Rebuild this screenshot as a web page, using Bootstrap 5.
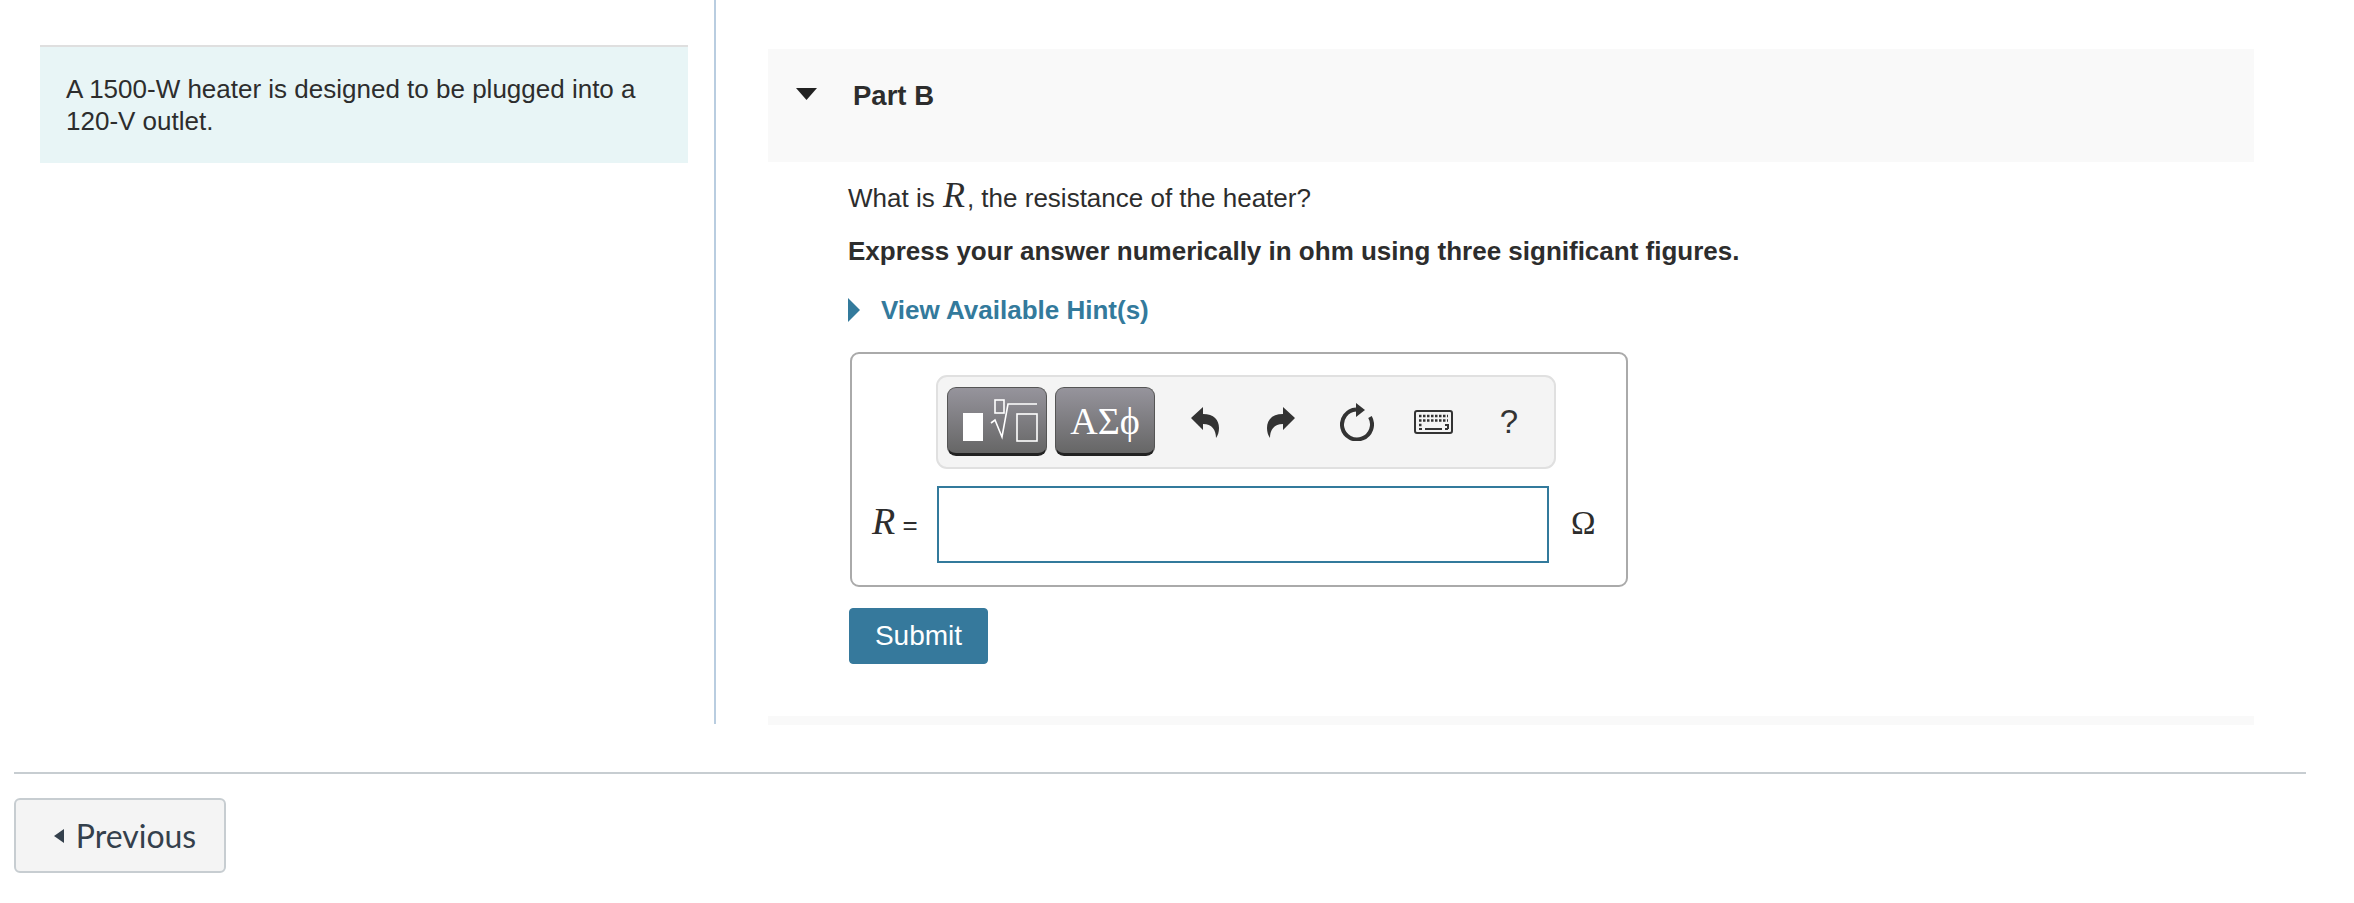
<!DOCTYPE html>
<html lang="en">
<head>
  <meta charset="UTF-8" />
  <title>Part B</title>
  <link href="https://cdn.jsdelivr.net/npm/bootstrap@5.3.3/dist/css/bootstrap.min.css" rel="stylesheet" />
  <style>
    body { font-family: "Liberation Sans", Arial, sans-serif; color: #2d2d2d; background: #fff; font-size: 26px; line-height: 32px; }
    .side-col { width: 716px; height: 724px; padding: 45px 26px 0 40px; border-right: 2px solid #b9cde0; flex: none; }
    .intro-box { background: #e8f5f6; border-top: 2px solid #dfdfdf; height: 118px; padding: 26px 26px 0; }
    .main-col { width: 1486px; margin-left: 52px; height: 725px; padding-top: 49px; }
    .part-head { height: 113px; background: #f9f9f9; padding: 31px 0 0 28px; }
    .part-title { font-size: 27.5px; margin-left: 36px; line-height: 32px; }
    .part-body { padding: 20px 0 0 80px; height: 554px; }
    .part-foot { height: 9px; background: #f9f9f9; }
    .q-line { height: 32px; margin-bottom: 20px; }
    .q-first { margin-bottom: 21px; }
    .q-rule { margin-bottom: 27px; }
    .math-var { font-family: "Liberation Serif", serif; font-style: italic; font-size: 36px; line-height: 0; margin: 0 2px 0 1px; }
    .hint-link { color: #337a9c; font-weight: 700; font-size: 26px; text-decoration: none; margin-left: 21px; }
    .answer-box { width: 778px; height: 235px; margin-left: 2px; border: 2px solid #aaa; border-radius: 9px; margin-top: 26px; padding: 21px 0 0 20px; }
    .tool-bar { width: 620px; height: 94px; margin-left: 64px; background: #f4f4f4; border: 2px solid #e0e0e0; border-radius: 11px; padding: 10px 0 0 9px; }
    .tpl-btn { width: 100px; height: 69px; border-radius: 9px; border: 1px solid #555; border-bottom: 3px solid #222; background: linear-gradient(#96949c, #666); color: #fff; font-family: "Liberation Serif", serif; font-size: 38px; padding: 0; }
    .tpl-btn svg { display: block; }
    .tool-icon { width: 76px; height: 69px; flex: none; color: #333; }
    .tool-first { margin-left: 12px; }
    .help-mark { font-size: 33px; color: #333; }
    .answer-row { margin-top: 17px; }
    .answer-label { width: 65px; font-size: 26px; white-space: nowrap; }
    .answer-label .math-var { font-size: 38px; margin: 0; }
    .answer-input { width: 612px; height: 77px; border: 2px solid #337a9c; background: #fff; border-radius: 0; outline: 0; }
    .unit-mark { font-family: "Liberation Serif", serif; font-size: 33px; margin: 0 0 4px 22px; }
    .send-btn { --bs-btn-bg: #36799c; --bs-btn-border-color: #36799c; --bs-btn-color: #fff; --bs-btn-hover-bg: #2e6985; --bs-btn-hover-color: #fff; width: 139px; height: 56px; margin: 21px 0 0 1px; font-size: 28px; border-radius: 4px; padding: 0; }
    .page-foot { margin: 47px 48px 0 14px; border-top: 2px solid #c7cdd1; padding-top: 24px; }
    .prev-btn { --bs-btn-bg: #f4f4f4; --bs-btn-border-color: #c7cdd1; --bs-btn-color: #34404c; --bs-btn-border-width: 2px; width: 212px; height: 75px; font-family: Lato, sans-serif; font-size: 32px; border-radius: 6px; padding: 0 0 0 10px; gap: 12px; }
  </style>
</head>
<body>
  <div class="d-flex">
    <div class="side-col">
      <div class="intro-box">A 1500-W heater is designed to be plugged into a 120-V outlet.</div>
    </div>
    <div class="main-col">
      <div class="part-head d-flex align-items-start">
        <svg class="mt-2" width="21" height="12" viewBox="0 0 21 12"><path d="M0 0H21L10.5 12Z" fill="#222"/></svg>
        <div class="part-title fw-bold">Part B</div>
      </div>
      <div class="part-body">
        <div class="q-line q-first">What is <span class="math-var">R</span>, the resistance of the heater?</div>
        <div class="q-line q-rule fw-bold">Express your answer numerically in ohm using three significant figures.</div>
        <div class="q-line d-flex align-items-center">
          <svg width="12" height="24" viewBox="0 0 12 24"><path d="M0 0L12 12L0 24Z" fill="#337a9c"/></svg>
          <a class="hint-link" href="#">View Available Hint(s)</a>
        </div>
        <div class="answer-box">
          <div class="tool-bar d-flex align-items-start">
            <button class="tpl-btn me-2" type="button">
              <svg width="98" height="65" viewBox="1 1 98 65" fill="none" stroke="#fff" stroke-width="1.6">
                <rect x="16" y="26" width="20" height="28" fill="#fff" stroke="none"/>
                <rect x="48" y="13" width="9" height="13"/>
                <path d="M44 36L48 33L55 50L61 17H90"/>
                <rect x="70" y="27" width="20" height="27"/>
              </svg>
            </button>
            <button class="tpl-btn" type="button">ΑΣϕ</button>
            <div class="tool-icon tool-first d-flex align-items-center justify-content-center">
              <svg width="30" height="34" viewBox="0 0 30 32"><path d="M1 12L13 1V8C24 8 29 14 29 22C29 26 28 29 26 32C26 24 22 18 13 18V24Z" fill="currentColor"/></svg>
            </div>
            <div class="tool-icon d-flex align-items-center justify-content-center">
              <svg width="30" height="34" viewBox="0 0 30 32"><path d="M29 12L17 1V8C6 8 1 14 1 22C1 26 2 29 4 32C4 24 8 18 17 18V24Z" fill="currentColor"/></svg>
            </div>
            <div class="tool-icon d-flex align-items-center justify-content-center">
              <svg width="34" height="38" viewBox="0 0 34 38" fill="none"><path d="M30 14A15 15 0 1 1 16 6.5" stroke="currentColor" stroke-width="4"/><path d="M16 0L25 7L16 14Z" fill="currentColor"/></svg>
            </div>
            <div class="tool-icon d-flex align-items-center justify-content-center">
              <svg width="39" height="24" viewBox="0 0 39 24" fill="none">
                <rect x="1" y="1" width="37" height="22" rx="2" stroke="currentColor" stroke-width="2"/>
                <path d="M5 6H34M5 10.5H34M5 15H8" stroke="currentColor" stroke-width="2.5" stroke-dasharray="2.5 1.5"/>
                <path d="M11 19H28M5 19H8M31 19H34M31 15H34V19" stroke="currentColor" stroke-width="2"/>
              </svg>
            </div>
            <div class="tool-icon d-flex align-items-center justify-content-center help-mark">?</div>
          </div>
          <div class="answer-row d-flex align-items-center">
            <div class="answer-label"><span class="math-var">R</span> =</div>
            <input class="answer-input" type="text" aria-label="R" />
            <span class="unit-mark">Ω</span>
          </div>
        </div>
        <button class="btn send-btn d-block" type="button">Submit</button>
      </div>
      <div class="part-foot"></div>
    </div>
  </div>
  <div class="page-foot">
    <button class="btn prev-btn d-flex align-items-center justify-content-center" type="button">
      <svg width="10" height="14" viewBox="0 0 10 14"><path d="M10 0V14L0 7Z" fill="#34404c"/></svg>
      <span>Previous</span>
    </button>
  </div>
  <script src="https://cdn.jsdelivr.net/npm/bootstrap@5.3.3/dist/js/bootstrap.bundle.min.js"></script>
</body>
</html>
